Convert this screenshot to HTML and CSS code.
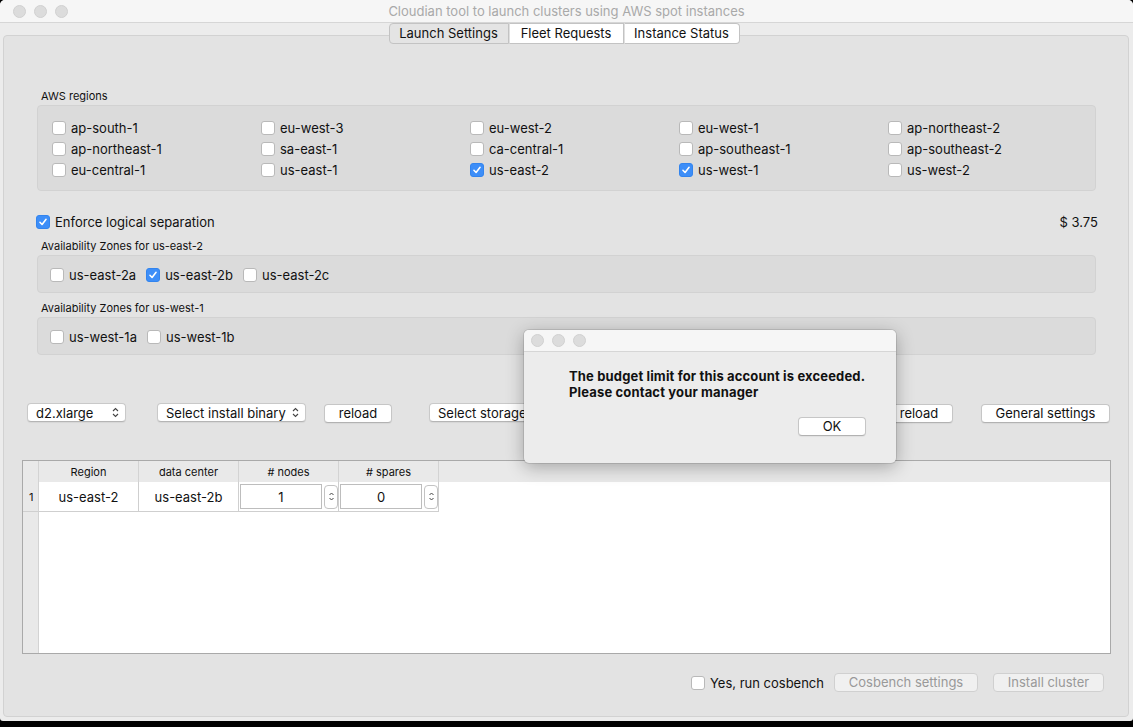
FILE: index.html
```html
<!DOCTYPE html>
<html lang="en">
<head>
    <meta charset="UTF-8">
    <title>Cloudian tool to launch clusters using AWS spot instances</title>
    <link rel="stylesheet" href="styles.css">
</head>
<body>
    <div class="window">
        <div class="titlebar">
            <div class="lights"><span></span><span></span><span></span></div>
            <div class="title">Cloudian tool to launch clusters using AWS spot instances</div>
        </div>
        <div class="main">
            <div class="tabs">
                <div class="tab active">Launch Settings</div>
                <div class="tab">Fleet Requests</div>
                <div class="tab">Instance Status</div>
            </div>
            <div class="pane">
                <div class="regions">
                    <div class="caption">AWS regions</div>
                    <div class="group region-grid">
                        <label class="check"><span class="box"></span>ap-south-1</label>
                        <label class="check"><span class="box"></span>eu-west-3</label>
                        <label class="check"><span class="box"></span>eu-west-2</label>
                        <label class="check"><span class="box"></span>eu-west-1</label>
                        <label class="check"><span class="box"></span>ap-northeast-2</label>
                        <label class="check"><span class="box"></span>ap-northeast-1</label>
                        <label class="check"><span class="box"></span>sa-east-1</label>
                        <label class="check"><span class="box"></span>ca-central-1</label>
                        <label class="check"><span class="box"></span>ap-southeast-1</label>
                        <label class="check"><span class="box"></span>ap-southeast-2</label>
                        <label class="check"><span class="box"></span>eu-central-1</label>
                        <label class="check"><span class="box"></span>us-east-1</label>
                        <label class="check"><span class="box on"><svg viewBox="0 0 13 13"><path d="M3.2 6.8 L5.5 9.2 L9.8 3.6"/></svg></span>us-east-2</label>
                        <label class="check"><span class="box on"><svg viewBox="0 0 13 13"><path d="M3.2 6.8 L5.5 9.2 L9.8 3.6"/></svg></span>us-west-1</label>
                        <label class="check"><span class="box"></span>us-west-2</label>
                    </div>
                    <div class="sep-row">
                        <label class="check"><span class="box on"><svg viewBox="0 0 13 13"><path d="M3.2 6.8 L5.5 9.2 L9.8 3.6"/></svg></span>Enforce logical separation</label>
                        <span class="cost">$ 3.75</span>
                    </div>
                    <div class="caption az">Availability Zones for us-east-2</div>
                    <div class="group zones">
                        <label class="check"><span class="box"></span>us-east-2a</label>
                        <label class="check"><span class="box on"><svg viewBox="0 0 13 13"><path d="M3.2 6.8 L5.5 9.2 L9.8 3.6"/></svg></span>us-east-2b</label>
                        <label class="check"><span class="box"></span>us-east-2c</label>
                    </div>
                    <div class="caption az2">Availability Zones for us-west-1</div>
                    <div class="group zones">
                        <label class="check"><span class="box"></span>us-west-1a</label>
                        <label class="check"><span class="box"></span>us-west-1b</label>
                    </div>
                </div>

                <div class="controls">
                    <div class="combo c-type">d2.xlarge<svg class="updown" viewBox="0 0 7 11"><path d="M1 4 L3.5 1.5 L6 4 M1 7 L3.5 9.5 L6 7"/></svg></div>
                    <div class="combo c-binary">Select install binary<svg class="updown" viewBox="0 0 7 11"><path d="M1 4 L3.5 1.5 L6 4 M1 7 L3.5 9.5 L6 7"/></svg></div>
                    <button class="btn b-reload">reload</button>
                    <div class="combo c-storage">Select storage policy<svg class="updown" viewBox="0 0 7 11"><path d="M1 4 L3.5 1.5 L6 4 M1 7 L3.5 9.5 L6 7"/></svg></div>
                    <div class="combo c-other">Select config<svg class="updown" viewBox="0 0 7 11"><path d="M1 4 L3.5 1.5 L6 4 M1 7 L3.5 9.5 L6 7"/></svg></div>
                    <button class="btn b-reload2">reload</button>
                    <button class="btn b-general">General settings</button>
                </div>

                <div class="table">
                    <div class="th corner"></div>
                    <div class="th">Region</div>
                    <div class="th">data center</div>
                    <div class="th"># nodes</div>
                    <div class="th"># spares</div>
                    <div class="th filler"></div>

                    <div class="rh">1</div>
                    <div class="td">us-east-2</div>
                    <div class="td">us-east-2b</div>
                    <div class="td spin-cell">
                        <div class="spin">1</div>
                        <div class="stepper"><svg viewBox="0 0 7 13"><path d="M1.5 5 L3.5 3 L5.5 5 M1.5 8 L3.5 10 L5.5 8"/></svg></div>
                    </div>
                    <div class="td spin-cell">
                        <div class="spin">0</div>
                        <div class="stepper"><svg viewBox="0 0 7 13"><path d="M1.5 5 L3.5 3 L5.5 5 M1.5 8 L3.5 10 L5.5 8"/></svg></div>
                    </div>
                    <div class="td filler"></div>

                    <div class="rh rest"></div>
                    <div class="empty"></div>
                </div>

                <div class="footer">
                    <label class="check"><span class="box"></span>Yes, run cosbench</label>
                    <button class="btn disabled b-cos">Cosbench settings</button>
                    <button class="btn disabled b-install">Install cluster</button>
                </div>
            </div>
        </div>

        <div class="dialog">
            <div class="dialog-bar">
                <div class="lights"><span></span><span></span><span></span></div>
            </div>
            <div class="dialog-body">
                <p>The budget limit for this account is exceeded.<br>Please contact your manager</p>
                <div class="dialog-actions">
                    <button class="btn b-ok">OK</button>
                </div>
            </div>
        </div>
    </div>
</body>
</html>
```

FILE: styles.css
```css
body {
    margin: 0;
    padding: 0;
    background: #000;
    font-family: 'Inter', 'Liberation Sans', sans-serif;
    font-size: 13px;
    color: #111;
}
.window {
    position: relative;
    width: 1133px;
    height: 721px;
    background: #ececec;
    border-radius: 5px 5px 3px 3px;
    overflow: hidden;
    display: flex;
    flex-direction: column;
}
.titlebar {
    height: 22px;
    background: #f6f6f6;
    border-bottom: 1px solid #d6d6d6;
    display: flex;
    align-items: center;
    position: relative;
}
.lights {
    display: flex;
    gap: 8px;
    padding-left: 13px;
}
.lights span {
    width: 11px;
    height: 11px;
    border-radius: 50%;
    background: #dcdcdc;
    border: 1px solid #d0d0d0;
}
.title {
    flex: 1;
    text-align: center;
    color: #a9a9a9;
    font-size: 13px;
    margin-right: 68px;
}
.main {
    flex: 1;
    display: flex;
    flex-direction: column;
    padding: 0 4px 4px 3px;
}
.tabs {
    display: flex;
    justify-content: center;
    margin-bottom: -9px;
    position: relative;
    z-index: 1;
    padding-right: 4px;
}
.tab {
    box-sizing: border-box;
    height: 21px;
    line-height: 19px;
    white-space: nowrap;
    text-align: center;
    background: #fff;
    border: 1px solid #c3c3c3;
    border-left: 1px solid #e0e0e0;
    color: #111;
}
.tab:first-child {
    border-left: 1px solid #c3c3c3;
    border-radius: 4px 0 0 4px;
    width: 120px;
}
.tab:nth-child(2) { width: 115px; }
.tab:last-child {
    border-radius: 0 4px 4px 0;
    width: 116px;
}
.tab.active {
    background: #e4e4e4;
}
.pane {
    flex: 1;
    background: #e3e3e3;
    border: 1px solid #d2d2d2;
    border-radius: 4px;
    padding: 0 17px 0 18px;
    display: flex;
    flex-direction: column;
}
.regions {
    margin: 53px 15px 0 15px;
}
.caption {
    font-size: 11px;
    line-height: 14px;
    padding-left: 4px;
    margin-bottom: 2px;
}
.caption.az { margin-top: 7px; }
.caption.az2 { margin-top: 8px; }
.group {
    background: #dbdbdb;
    border: 1px solid #d2d2d2;
    border-radius: 4px;
}
.region-grid {
    display: grid;
    grid-template-columns: repeat(5, 209px);
    grid-auto-rows: 21px;
    padding: 11px 14px 10px;
}
.check {
    display: flex;
    align-items: center;
    gap: 5px;
    white-space: nowrap;
}
.box {
    width: 12px;
    height: 12px;
    background: #fff;
    border: 1px solid #b9b9b9;
    border-radius: 3px;
    flex: none;
    display: flex;
}
.box.on {
    background: #3d8ef8;
    border-color: #3284ee;
}
.box svg {
    width: 12px;
    height: 12px;
    fill: none;
    stroke: #fff;
    stroke-width: 1.7;
    stroke-linecap: round;
    stroke-linejoin: round;
}
.sep-row {
    margin: 21px -2px 0 -1px;
    height: 20px;
    display: flex;
    align-items: center;
    justify-content: space-between;
}
.zones {
    display: flex;
    gap: 10px;
    padding: 9px 12px 7px;
    height: 20px;
    align-items: center;
}
.controls {
    margin-top: 47px;
    height: 21px;
    display: flex;
    align-items: center;
}
.combo {
    height: 19px;
    background: #fff;
    border: 1px solid #c9c9c9;
    border-bottom-color: #b5b5b5;
    border-radius: 4px;
    box-shadow: 0 1px 1px rgba(0, 0, 0, 0.06);
    display: flex;
    align-items: center;
    justify-content: space-between;
    padding: 0 6px 0 8px;
    box-sizing: border-box;
}
.updown {
    width: 7px;
    height: 11px;
    fill: none;
    stroke: #444;
    stroke-width: 1.1;
}
.c-type { width: 99px; margin-left: 5px; }
.c-binary { width: 149px; margin-left: 31px; }
.c-storage { width: 170px; margin-left: 37px; }
.c-other { width: 180px; margin-left: 20px; }
.btn {
    font-family: inherit;
    font-size: 13px;
    color: #111;
    height: 19px;
    background: #fff;
    border: 1px solid #c6c6c6;
    border-bottom-color: #b2b2b2;
    border-radius: 4px;
    box-shadow: 0 1px 1px rgba(0, 0, 0, 0.05);
    padding: 0;
    line-height: 17px;
}
.b-reload { width: 68px; margin-left: 18px; margin-top: 2px; }
.b-reload2 { width: 68px; margin-left: auto; margin-top: 2px; }
.b-general { width: 129px; margin-left: 28px; margin-right: 1px; margin-top: 1px; }

.table {
    margin-top: 37px;
    height: 194px;
    box-sizing: border-box;
    border: 1px solid #a9a9a9;
    background: #fff;
    display: grid;
    grid-template-columns: 16px 100px 100px 100px 100px 1fr;
    grid-template-rows: 21px 30px 1fr;
}
.th {
    background: #e9e9e9;
    border-right: 1px solid #d3d3d3;
    font-size: 11px;
    display: flex;
    align-items: center;
    justify-content: center;
}
.th.filler { border-right: none; }
.rh {
    background: #e9e9e9;
    border-right: 1px solid #d3d3d3;
    border-bottom: 1px solid #cfcfcf;
    font-size: 11px;
    display: flex;
    align-items: center;
    padding-left: 6px;
}
.rh.rest {
    border-bottom: none;
}
.td {
    border-right: 1px solid #cfcfcf;
    border-bottom: 1px solid #cfcfcf;
    display: flex;
    align-items: center;
    justify-content: center;
}
.td.filler {
    border: none;
}
.empty {
    grid-column: 2 / 7;
}
.spin-cell {
    justify-content: flex-start;
    gap: 2px;
    padding-left: 1px;
}
.spin {
    width: 82px;
    height: 25px;
    box-sizing: border-box;
    border: 1px solid #bdbdbd;
    background: #fff;
    display: flex;
    align-items: center;
    justify-content: center;
}
.stepper {
    width: 12px;
    height: 22px;
    border: 1px solid #c3c3c3;
    border-radius: 4px;
    background: #fff;
    display: flex;
    align-items: center;
    justify-content: center;
}
.stepper svg {
    width: 7px;
    height: 13px;
    fill: none;
    stroke: #444;
    stroke-width: 1;
}
.footer {
    margin-top: 19px;
    display: flex;
    align-items: center;
    justify-content: flex-end;
    padding-right: 7px;
}
.footer .check { margin-right: 10px; }
.btn.disabled {
    background: #f0f0f0;
    color: #999;
    border-color: #d0d0d0;
    box-shadow: none;
}
.b-cos { width: 144px; }
.b-install { width: 111px; margin-left: 15px; }

.dialog {
    position: absolute;
    left: 524px;
    top: 330px;
    width: 372px;
    height: 133px;
    background: #ececec;
    border-radius: 5px;
    box-shadow: 0 4px 18px rgba(0, 0, 0, 0.3), 0 0 0 1px rgba(0, 0, 0, 0.1);
    overflow: hidden;
}
.dialog-bar {
    height: 21px;
    background: #f6f6f6;
    border-bottom: 1px solid #d6d6d6;
    display: flex;
    align-items: center;
}
.dialog-bar .lights { padding-left: 7px; }
.dialog-body {
    padding: 16px 30px 0 45px;
}
.dialog-body p {
    margin: 0;
    font-weight: bold;
    line-height: 16px;
    letter-spacing: 0.15px;
}
.dialog-actions {
    display: flex;
    justify-content: flex-end;
    margin-top: 17px;
}
.b-ok { width: 68px; }
```
